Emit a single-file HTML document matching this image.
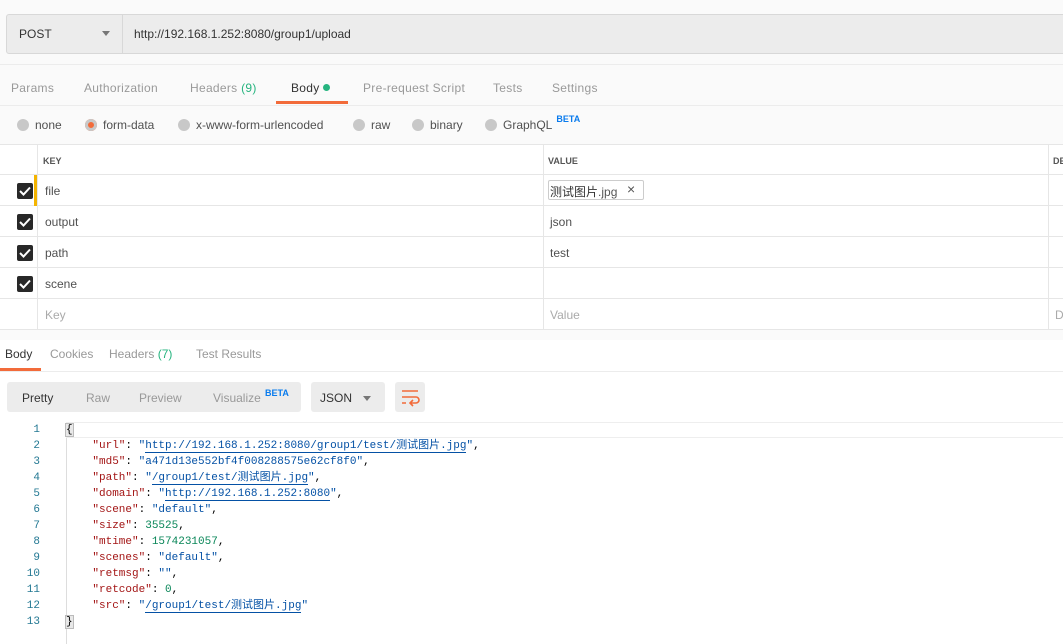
<!DOCTYPE html>
<html><head><meta charset="utf-8"><style>
*{box-sizing:border-box;margin:0;padding:0}
body{width:1063px;height:644px;overflow:hidden;background:#fff;font-family:"Liberation Sans","Noto Sans CJK SC",sans-serif;font-size:12px;color:#505050;position:relative}
.a{position:absolute}
.tab{position:absolute;top:81px;color:#999;font-size:12px;letter-spacing:0.3px}
.rad{position:absolute;top:117px;height:16px;font-size:12px;color:#505050;display:flex;align-items:center;white-space:nowrap}
.rad i{display:inline-block;width:12px;height:12px;border-radius:50%;background:#c8c8c8;margin-right:6px}
.rad sup{position:relative;top:-6px;margin-left:4px}
.row{position:absolute;left:0;width:1063px;height:31px;border-bottom:1px solid #e6e6e6}
.cb{position:absolute;left:17px;top:8px;width:16px;height:16px;background:#282828;border-radius:2px}
.cb svg{position:absolute;left:2px;top:3px}
.k{position:absolute;left:45px;top:9px;color:#505050}
.v{position:absolute;left:550px;top:9px;color:#505050}
.code{position:absolute;left:0;top:422px;font-family:"Liberation Mono","Noto Sans CJK SC",monospace;font-size:11px;line-height:16px}
.ln{position:absolute;left:0;width:40px;text-align:right;color:#237893}
.cl{position:absolute;left:66px;white-space:pre;color:#000}
.key{color:#a31515}.s{color:#0451a5}.n{color:#098658}
.u{border-bottom:1px solid #0451a5}
</style></head><body>
<div class="a" style="left:0;top:0;width:1063px;height:330px;background:#fafafa"></div>
<div class="a" style="left:6px;top:14px;width:1060px;height:40px;background:#ececec;border:1px solid #d8d8d8;border-radius:3px"></div>
<div class="a" style="left:122px;top:14px;width:1px;height:40px;background:#d8d8d8"></div>
<div class="a" style="left:19px;top:27px;color:#333;font-size:12px">POST</div>
<div class="a" style="left:102px;top:31px;border-left:4px solid transparent;border-right:4px solid transparent;border-top:5px solid #777"></div>
<div class="a" style="left:134px;top:27px;color:#333;font-size:12px">http://192.168.1.252:8080/group1/upload</div>
<div class="a" style="left:0;top:64px;width:1063px;height:1px;background:#ececec"></div>
<div class="tab" style="left:11px">Params</div>
<div class="tab" style="left:84px">Authorization</div>
<div class="tab" style="left:190px">Headers <span style="color:#26b47f">(9)</span></div>
<div class="tab" style="left:291px;color:#333">Body <span style="display:inline-block;width:7px;height:7px;border-radius:50%;background:#26b47f;vertical-align:1px"></span></div>
<div class="tab" style="left:363px">Pre-request Script</div>
<div class="tab" style="left:493px">Tests</div>
<div class="tab" style="left:552px">Settings</div>
<div class="a" style="left:276px;top:101px;width:72px;height:3px;background:#f26b3a"></div>
<div class="a" style="left:0;top:105px;width:1063px;height:1px;background:#ececec"></div>
<div class="rad" style="left:17px"><i></i>none</div>
<div class="rad" style="left:85px"><i style="background:#f26b3a;box-shadow:inset 0 0 0 3px #c8c8c8"></i>form-data</div>
<div class="rad" style="left:178px"><i></i>x-www-form-urlencoded</div>
<div class="rad" style="left:353px"><i></i>raw</div>
<div class="rad" style="left:412px"><i></i>binary</div>
<div class="rad" style="left:485px"><i></i>GraphQL<sup style="color:#097bed;font-size:9px;font-weight:bold">BETA</sup></div>
<div class="a" style="left:0;top:144px;width:1063px;height:187px;background:#fff;border-top:1px solid #e6e6e6"></div>
<div class="row" style="top:144px;border-top:1px solid #e6e6e6"><div class="a" style="left:43px;top:11px;font-size:9px;font-weight:bold;color:#555">KEY</div><div class="a" style="left:548px;top:11px;font-size:9px;font-weight:bold;color:#555">VALUE</div><div class="a" style="left:1053px;top:11px;font-size:9px;font-weight:bold;color:#555">DE</div></div>
<div class="row" style="top:175px"><div class="cb"><svg width="12" height="10"><path d="M1 5l3.5 3.5L11 1.5" stroke="#fff" stroke-width="2" fill="none"/></svg></div><div class="a" style="left:34px;top:0;width:3px;height:31px;background:#f4b400"></div><div class="k">file</div><div class="a" style="left:548px;top:5px;width:96px;height:20px;border:1px solid #ccc;border-radius:2px;background:#fff"></div><div class="a" style="left:550px;top:8px;color:#333">测试图片<span style="color:#555">.jpg</span></div><div class="a" style="left:627px;top:6px;color:#555;font-size:14px">×</div></div>
<div class="row" style="top:206px"><div class="cb"><svg width="12" height="10"><path d="M1 5l3.5 3.5L11 1.5" stroke="#fff" stroke-width="2" fill="none"/></svg></div><div class="k">output</div><div class="v">json</div></div>
<div class="row" style="top:237px"><div class="cb"><svg width="12" height="10"><path d="M1 5l3.5 3.5L11 1.5" stroke="#fff" stroke-width="2" fill="none"/></svg></div><div class="k">path</div><div class="v">test</div></div>
<div class="row" style="top:268px"><div class="cb"><svg width="12" height="10"><path d="M1 5l3.5 3.5L11 1.5" stroke="#fff" stroke-width="2" fill="none"/></svg></div><div class="k">scene</div></div>
<div class="row" style="top:299px"><div class="k" style="color:#aaa">Key</div><div class="v" style="color:#aaa">Value</div><div class="a" style="left:1055px;top:9px;color:#aaa">D</div></div>
<div class="a" style="left:37px;top:144px;width:1px;height:187px;background:#e6e6e6"></div>
<div class="a" style="left:543px;top:144px;width:1px;height:187px;background:#e6e6e6"></div>
<div class="a" style="left:1048px;top:144px;width:1px;height:187px;background:#e6e6e6"></div>
<div class="a" style="left:0;top:330px;width:1063px;height:10px;background:#fafafa"></div>
<div class="a" style="left:5px;top:347px;color:#333">Body</div>
<div class="a" style="left:50px;top:347px;color:#999">Cookies</div>
<div class="a" style="left:109px;top:347px;color:#999">Headers <span style="color:#26b47f">(7)</span></div>
<div class="a" style="left:196px;top:347px;color:#999">Test Results</div>
<div class="a" style="left:0;top:368px;width:41px;height:3px;background:#f26b3a"></div>
<div class="a" style="left:0;top:371px;width:1063px;height:1px;background:#ececec"></div>
<div class="a" style="left:7px;top:382px;width:294px;height:30px;background:#ececec;border-radius:3px"></div>
<div class="a" style="left:22px;top:391px;color:#333">Pretty</div>
<div class="a" style="left:86px;top:391px;color:#999">Raw</div>
<div class="a" style="left:139px;top:391px;color:#999">Preview</div>
<div class="a" style="left:213px;top:391px;color:#999">Visualize</div>
<div class="a" style="left:265px;top:388px;color:#097bed;font-size:9px;font-weight:bold">BETA</div>
<div class="a" style="left:311px;top:382px;width:74px;height:30px;background:#ececec;border-radius:3px"></div>
<div class="a" style="left:320px;top:391px;color:#333">JSON</div>
<div class="a" style="left:363px;top:396px;border-left:4px solid transparent;border-right:4px solid transparent;border-top:5px solid #777"></div>
<div class="a" style="left:395px;top:382px;width:30px;height:30px;background:#ececec;border-radius:3px"><svg width="30" height="30"><path d="M7 9h16M7 15h14a3 3 0 0 1 0 6h-5M7 21h4M18 18l-3 3 3 3" stroke="#f26b3a" stroke-width="1.6" fill="none"/></svg></div>
<div class="a" style="left:66px;top:422px;width:1px;height:222px;background:#ddd"></div>
<div class="a" style="left:66px;top:422px;width:997px;height:16px;border-top:1px solid #eee;border-bottom:1px solid #eee"></div>
<div class="code" style="width:1063px">
<div class="ln" style="top:0">1</div><div class="cl" style="top:0"><span style="background:#e8e8e8;outline:1px solid #bbb">{</span></div>
<div class="ln" style="top:16px">2</div><div class="cl" style="top:16px">    <span class="key">"url"</span>: <span class="s">"<span class="u">http://192.168.1.252:8080/group1/test/测试图片.jpg</span>"</span>,</div>
<div class="ln" style="top:32px">3</div><div class="cl" style="top:32px">    <span class="key">"md5"</span>: <span class="s">"a471d13e552bf4f008288575e62cf8f0"</span>,</div>
<div class="ln" style="top:48px">4</div><div class="cl" style="top:48px">    <span class="key">"path"</span>: <span class="s">"<span class="u">/group1/test/测试图片.jpg</span>"</span>,</div>
<div class="ln" style="top:64px">5</div><div class="cl" style="top:64px">    <span class="key">"domain"</span>: <span class="s">"<span class="u">http://192.168.1.252:8080</span>"</span>,</div>
<div class="ln" style="top:80px">6</div><div class="cl" style="top:80px">    <span class="key">"scene"</span>: <span class="s">"default"</span>,</div>
<div class="ln" style="top:96px">7</div><div class="cl" style="top:96px">    <span class="key">"size"</span>: <span class="n">35525</span>,</div>
<div class="ln" style="top:112px">8</div><div class="cl" style="top:112px">    <span class="key">"mtime"</span>: <span class="n">1574231057</span>,</div>
<div class="ln" style="top:128px">9</div><div class="cl" style="top:128px">    <span class="key">"scenes"</span>: <span class="s">"default"</span>,</div>
<div class="ln" style="top:144px">10</div><div class="cl" style="top:144px">    <span class="key">"retmsg"</span>: <span class="s">""</span>,</div>
<div class="ln" style="top:160px">11</div><div class="cl" style="top:160px">    <span class="key">"retcode"</span>: <span class="n">0</span>,</div>
<div class="ln" style="top:176px">12</div><div class="cl" style="top:176px">    <span class="key">"src"</span>: <span class="s">"<span class="u">/group1/test/测试图片.jpg</span>"</span></div>
<div class="ln" style="top:192px">13</div><div class="cl" style="top:192px"><span style="background:#e8e8e8;outline:1px solid #bbb">}</span></div>
</div>
</body></html>
